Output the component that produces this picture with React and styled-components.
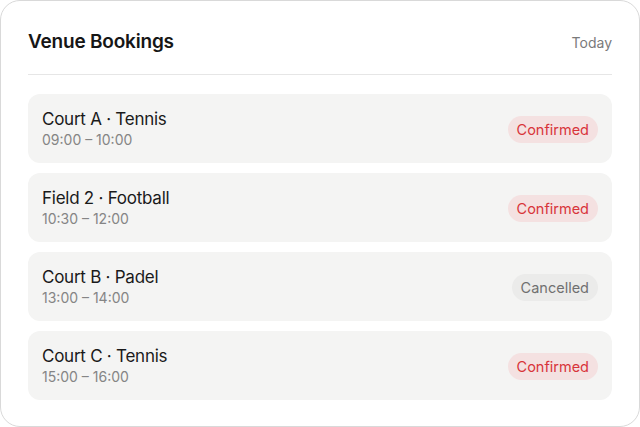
import styled, { createGlobalStyle } from 'styled-components';

const GlobalStyle = createGlobalStyle`
  html, body {
    margin: 0;
    padding: 0;
    background: #ffffff;
  }
  body {
    font-family: Inter, "Noto Sans", sans-serif;
  }
`;

const bookings = [
  { id: 1, name: 'Court A · Tennis', time: '09:00 – 10:00', status: 'Confirmed' },
  { id: 2, name: 'Field 2 · Football', time: '10:30 – 12:00', status: 'Confirmed' },
  { id: 3, name: 'Court B · Padel', time: '13:00 – 14:00', status: 'Cancelled' },
  { id: 4, name: 'Court C · Tennis', time: '15:00 – 16:00', status: 'Confirmed' },
];

export default function App() {
  return (
    <>
      <GlobalStyle />
      <Card>
        <Header>
          <Title>Venue Bookings</Title>
          <DateLabel>Today</DateLabel>
        </Header>
        <List>
          {bookings.map(b => (
            <Row key={b.id}>
              <Info>
                <Name>{b.name}</Name>
                <Time>{b.time}</Time>
              </Info>
              <Badge $cancelled={b.status === 'Cancelled'}>{b.status}</Badge>
            </Row>
          ))}
        </List>
      </Card>
    </>
  );
}

const Card = styled.div`
  box-sizing: border-box;
  width: 640px;
  height: 427px;
  border: 1px solid #d9d9d9;
  border-radius: 20px;
  background: #fff;
  padding: 27px 27px 26px;
  display: flex;
  flex-direction: column;
`;

const Header = styled.div`
  display: flex;
  justify-content: space-between;
  align-items: center;
  padding-bottom: 18px;
  border-bottom: 1.5px solid #e6e6e6;
`;

const Title = styled.h1`
  margin: 0;
  font-size: 19px;
  line-height: 28px;
  font-weight: 600;
  color: #161616;
  letter-spacing: -0.2px;
`;

const DateLabel = styled.span`
  font-size: 14px;
  color: #7a7a7a;
`;

const List = styled.div`
  display: flex;
  flex-direction: column;
  gap: 10px;
  margin-top: 19px;
`;

const Row = styled.div`
  display: flex;
  justify-content: space-between;
  align-items: center;
  background: #f4f4f3;
  border-radius: 12px;
  padding: 14px 14px 13px;
`;

const Info = styled.div`
  display: flex;
  flex-direction: column;
`;

const Name = styled.div`
  font-size: 17px;
  line-height: 22px;
  color: #1a1a1a;
  letter-spacing: -0.25px;
`;

const Time = styled.div`
  font-size: 14px;
  line-height: 20px;
  color: #858585;
`;

const Badge = styled.span`
  font-size: 14.5px;
  line-height: 19px;
  padding: 4px 9px;
  border-radius: 999px;
  color: ${p => (p.$cancelled ? '#707070' : '#d8343a')};
  background: ${p => (p.$cancelled ? '#ebebea' : '#f4e1e1')};
`;
